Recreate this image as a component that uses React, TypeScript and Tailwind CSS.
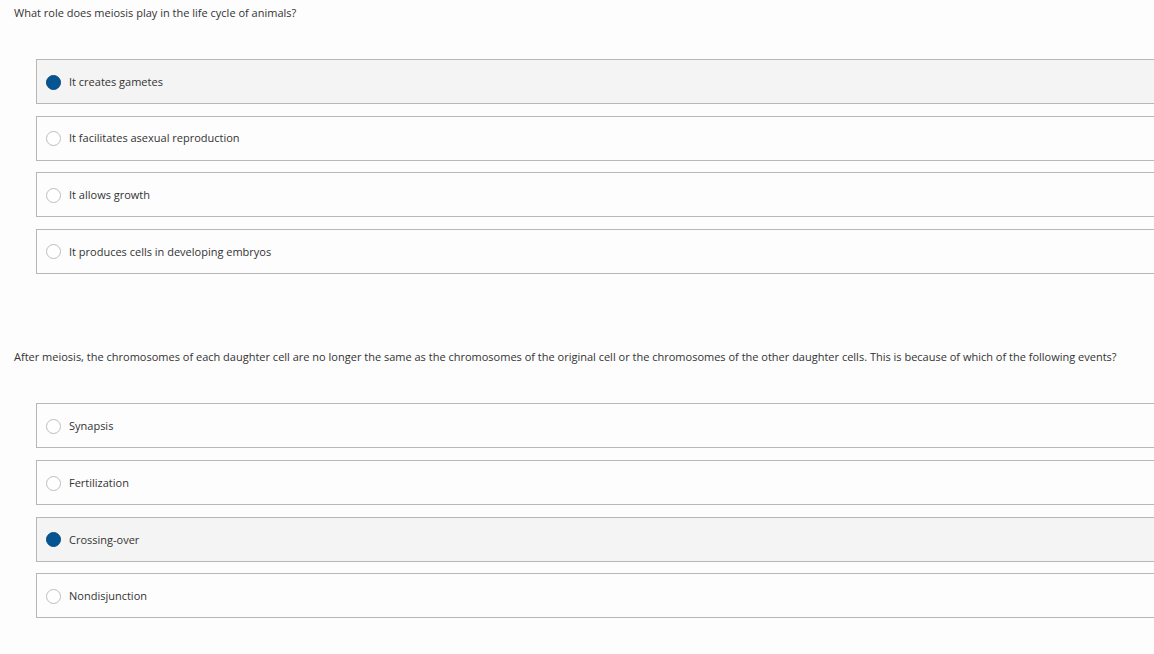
const questions = [
  {
    prompt: 'What role does meiosis play in the life cycle of animals?',
    options: [
      'It creates gametes',
      'It facilitates asexual reproduction',
      'It allows growth',
      'It produces cells in developing embryos'
    ],
    selected: 0
  },
  {
    prompt:
      'After meiosis, the chromosomes of each daughter cell are no longer the same as the chromosomes of the original cell or the chromosomes of the other daughter cells. This is because of which of the following events?',
    options: ['Synapsis', 'Fertilization', 'Crossing-over', 'Nondisjunction'],
    selected: 2
  }
];

function Radio({ checked }: { checked: boolean }) {
  return checked ? (
    <span className="h-[15px] w-[15px] shrink-0 rounded-full border border-[#0a4a7c] bg-[#055593]" />
  ) : (
    <span className="h-[15px] w-[15px] shrink-0 rounded-full border border-[#bdbdbd] bg-white" />
  );
}

function Question({ prompt, options, selected }: (typeof questions)[number]) {
  return (
    <section>
      <p className="pl-[14px] text-[11px] leading-[16px] text-[#333333]">{prompt}</p>
      <div className="mt-[38px] flex flex-col gap-[11.67px]">
        {options.map((option, i) => (
          <div
            key={option}
            className={
              i === selected
                ? 'ml-[36px] mr-[-20px] flex h-[45px] items-center gap-[8px] border border-[#b7b7b7] bg-[#f4f4f4] pl-[9px] pt-[1px]'
                : 'ml-[36px] mr-[-20px] flex h-[45px] items-center gap-[8px] border border-[#b7b7b7] bg-[#fdfdfd] pl-[9px] pt-[1px]'
            }
          >
            <Radio checked={i === selected} />
            <span className="text-[11px] text-[#333333]">{option}</span>
          </div>
        ))}
      </div>
    </section>
  );
}

export default function App() {
  return (
    <div className="min-h-[654px] w-full overflow-hidden bg-[#fdfdfd] pt-[5px] font-['Open_Sans',sans-serif]">
      <Question {...questions[0]} />
      <div className="mt-[75.5px]">
        <Question {...questions[1]} />
      </div>
    </div>
  );
}
